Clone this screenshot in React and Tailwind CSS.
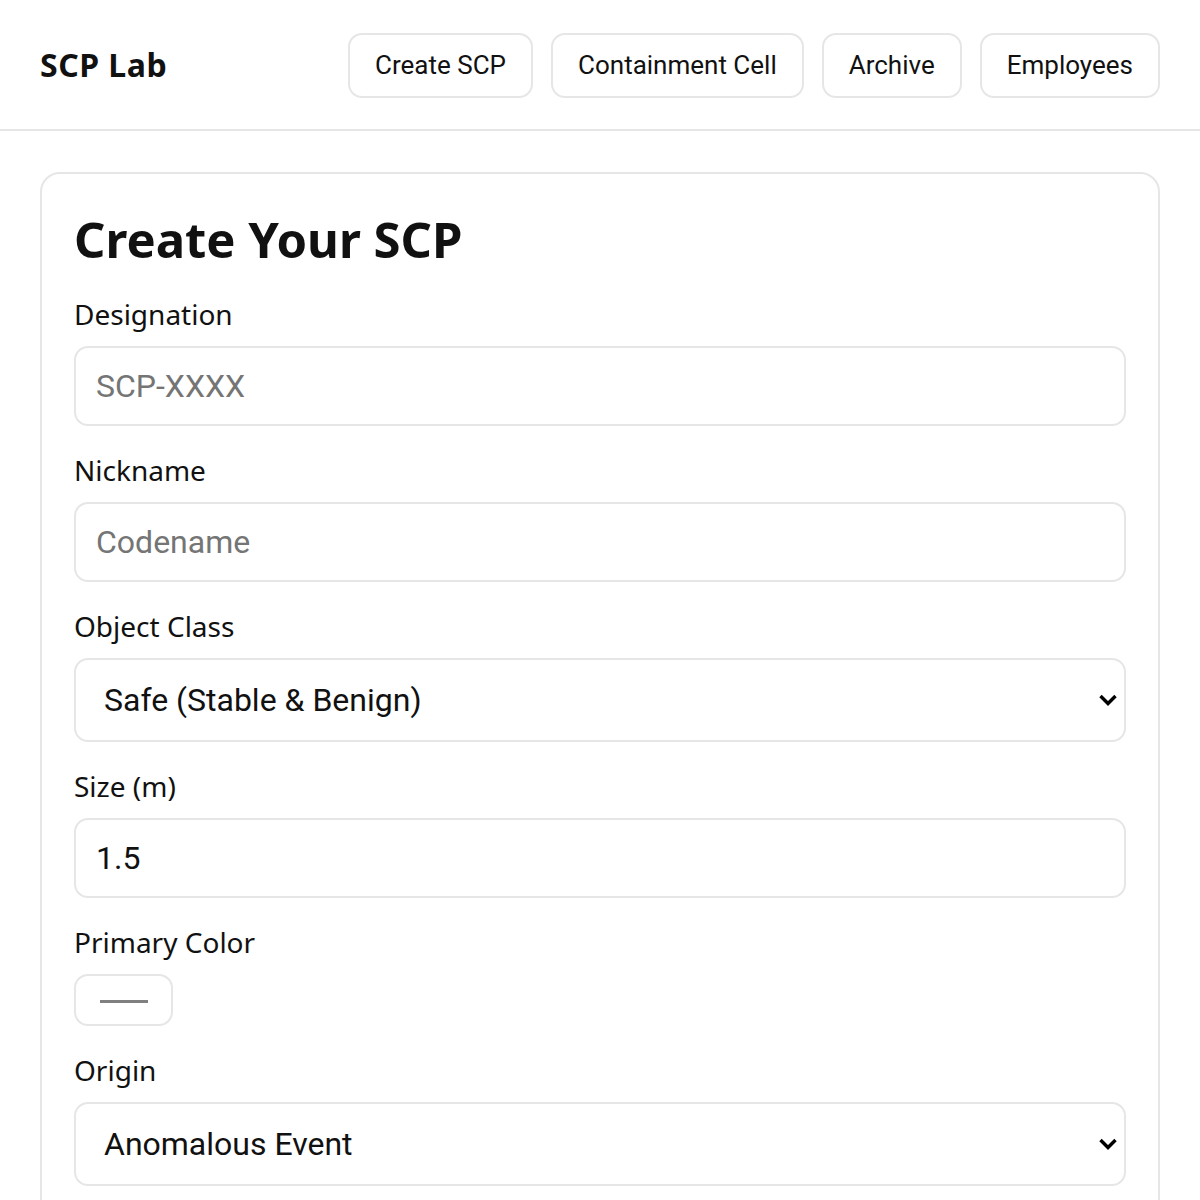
import React from "react";

const NAV = ["Create SCP", "Containment Cell", "Archive", "Employees"];

function Label({ children }) {
  return (
    <label className="block text-[28px] leading-[40px] mb-[12px] text-[#111]">
      {children}
    </label>
  );
}

function TextInput({ placeholder, value }) {
  return (
    <input
      type="text"
      placeholder={placeholder}
      defaultValue={value}
      className="block w-full h-[80px] box-border border-2 border-[#e6e6e6] rounded-[14px] px-[20px] text-[32px] text-[#111] placeholder:text-[#757575] bg-white outline-none [font-family:Roboto,'Liberation_Sans',sans-serif]"
    />
  );
}

function Select({ value, options }) {
  return (
    <div className="relative">
      <select
        defaultValue={value}
        className="block w-full h-[84px] box-border appearance-none border-2 border-[#e6e6e6] rounded-[14px] pl-[28px] pr-[48px] text-[32px] text-[#111] bg-white outline-none [font-family:Roboto,'Liberation_Sans',sans-serif]"
      >
        {options.map((o) => (
          <option key={o}>{o}</option>
        ))}
      </select>
      <svg
        className="pointer-events-none absolute right-[8px] top-1/2 -translate-y-1/2"
        width="20"
        height="13"
        viewBox="0 0 20 13"
      >
        <path d="M2.5 2.5 L10 10 L17.5 2.5" fill="none" stroke="#000" strokeWidth="3.4" />
      </svg>
    </div>
  );
}

export default function App() {
  return (
    <div className="min-h-screen bg-white text-[#111] [font-family:'Noto_Sans',sans-serif]">
      <header className="h-[131px] box-border border-b-2 border-[#e6e6e6] flex items-center justify-between pl-[40px] pr-[40px]">
        <div className="text-[32px] font-bold tracking-[0.5px]">SCP Lab</div>
        <nav className="flex gap-[18px] pt-[1px]">
          {NAV.map((n) => (
            <button
              key={n}
              className="h-[65px] box-border px-[25px] border-2 border-[#e6e6e6] rounded-[14px] bg-white text-[26px] text-[#111] [font-family:Roboto,'Liberation_Sans',sans-serif]"
            >
              {n}
            </button>
          ))}
        </nav>
      </header>
      <main className="px-[40px] pt-[41px] pb-[40px]">
        <div className="border-2 border-[#e6e6e6] rounded-[20px] px-[32px] pt-[36px] pb-[32px]">
          <h1 className="text-[49px] font-bold leading-[1.2] mb-[25px]">Create Your SCP</h1>
          <div className="flex flex-col gap-[24px]">
            <div>
              <Label>Designation</Label>
              <TextInput placeholder="SCP-XXXX" />
            </div>
            <div>
              <Label>Nickname</Label>
              <TextInput placeholder="Codename" />
            </div>
            <div>
              <Label>Object Class</Label>
              <Select
                value="Safe (Stable & Benign)"
                options={[
                  "Safe (Stable & Benign)",
                  "Euclid (Unpredictable)",
                  "Keter (Hostile & Dangerous)",
                ]}
              />
            </div>
            <div>
              <Label>Size (m)</Label>
              <TextInput value="1.5" />
            </div>
            <div>
              <Label>Primary Color</Label>
              <div className="w-[99px] h-[52px] box-border border-2 border-[#e6e6e6] rounded-[14px] flex items-center justify-center pt-[3px]">
                <div className="w-[48px] h-[3px] bg-[#808080]" />
              </div>
            </div>
            <div>
              <Label>Origin</Label>
              <Select
                value="Anomalous Event"
                options={["Anomalous Event", "Artifact", "Extradimensional"]}
              />
            </div>
            <div>
              <Label>Description</Label>
              <TextInput placeholder="Describe your SCP" />
            </div>
          </div>
        </div>
      </main>
    </div>
  );
}
